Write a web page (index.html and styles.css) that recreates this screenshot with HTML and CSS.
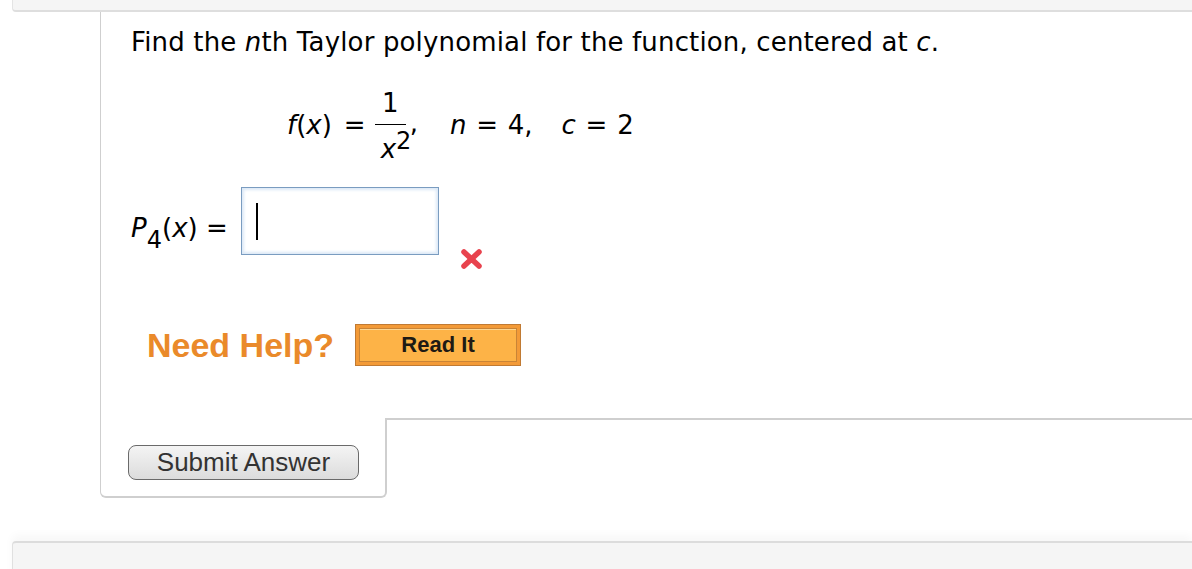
FILE: index.html
```html
<!DOCTYPE html>
<html>
<head>
<meta charset="utf-8">
<link rel="stylesheet" href="styles.css">
</head>
<body>
<div class="top-bar"></div>
<div class="question">
  <div class="content">
    <p class="prompt">Find the <i>n</i>th Taylor polynomial for the function, centered at <i>c</i>.</p>
    <div class="formula">
      <span class="fx"><i>f</i>(<i>x</i>)</span>
      <span class="eq">=</span>
      <span class="frac">
        <span class="num">1</span>
        <span class="den"><i>x</i><sup>2</sup></span>
      </span>
      <span class="comma">,</span>
      <span class="param first"><i>n</i> = 4,</span>
      <span class="param"><i>c</i> = 2</span>
    </div>
    <div class="answer-row">
      <span class="plabel"><i>P</i><sub>4</sub>(<i>x</i>) =</span>
      <div class="answer-box"><span class="caret"></span></div>
      <svg class="wrong" width="30" height="24" viewBox="0 0 30 24">
        <path d="M7 5 L22 19 M22 5 L7 19" stroke="#e8434e" stroke-width="5.5" stroke-linecap="round"/>
      </svg>
    </div>
    <div class="help-row">
      <span class="need-help">Need Help?</span>
      <button class="read-it"><span>Read It</span></button>
    </div>
  </div>
  <div class="footer">
    <div class="submit-cell">
      <button class="submit">Submit Answer</button>
    </div>
    <div class="filler"></div>
  </div>
</div>
<div class="next-box"></div>
</body>
</html>
```

FILE: styles.css
```css
html, body {
  margin: 0;
  padding: 0;
  background: #fff;
  overflow: hidden;
}
body {
  font-family: "DejaVu Sans", Verdana, sans-serif;
  color: #000;
  width: 1192px;
  height: 569px;
}
.top-bar {
  margin-left: 12px;
  height: 10px;
  background: #f5f5f5;
  border-bottom: 2px solid #dedede;
  border-left: 1px solid #e4e4e4;
  border-bottom-left-radius: 4px;
}
.question {
  margin-left: 100px;
}
.content {
  border-left: 1px solid #cfcfcf;
  padding: 15px 0 0 30px;
  height: 407px;
  box-sizing: border-box;
}
.prompt {
  margin: 0;
  font-size: 26px;
  line-height: 30px;
  letter-spacing: 0.15px;
}
.formula {
  display: flex;
  align-items: center;
  margin: 28px 0 0 156px;
  font-size: 26px;
  height: 80px;
}
.eq {
  margin: 0 9px 0 12px;
}
.frac {
  display: inline-flex;
  flex-direction: column;
  align-items: flex-start;
  width: 31px;
}
.num {
  line-height: 30px;
  border-bottom: 1.5px solid #000;
  width: 100%;
  text-align: center;
  padding: 2px 0 6px;
}
.den {
  line-height: 30px;
  padding: 9px 0 0 6px;
  white-space: nowrap;
}
.den sup {
  font-size: 24px;
  vertical-align: 9px;
  line-height: 0;
}
.comma {
  margin-left: 4px;
  position: relative;
  top: -2px;
}
.param {
  margin-left: 29px;
  word-spacing: 1.5px;
}
.param.first {
  margin-left: 32px;
}
.answer-row {
  display: flex;
  align-items: flex-start;
  margin-top: 22px;
  height: 80px;
}
.plabel {
  font-size: 26px;
  line-height: 30px;
  margin-top: 26px;
  margin-right: 13px;
  white-space: nowrap;
}
.plabel sub {
  font-size: 24px;
  vertical-align: -11px;
  line-height: 0;
}
.answer-box {
  width: 196px;
  height: 66px;
  border: 1px solid #7a9cc0;
  box-shadow: inset 0 0 3px 2px #dbe8f6;
  background: #fff;
  display: flex;
  align-items: center;
}
.caret {
  display: block;
  width: 2px;
  height: 37px;
  margin-left: 14px;
  background: #000;
}
.wrong {
  margin: 60px 0 0 18px;
}
.help-row {
  display: flex;
  align-items: center;
  margin: 57px 0 0 16px;
}
.need-help {
  font-family: "Liberation Sans", Arial, sans-serif;
  font-weight: bold;
  font-size: 34px;
  color: #ea8a2a;
}
.read-it {
  margin-left: 21px;
  width: 166px;
  height: 42px;
  padding: 3px;
  background: #f39a37;
  border: 1px solid #c07a33;
  cursor: pointer;
}
.read-it span {
  display: flex;
  align-items: center;
  justify-content: center;
  height: 100%;
  box-sizing: border-box;
  border: 1px solid #c98436;
  box-shadow: inset 0 1px 0 #ffd690;
  background: #fdb347;
  font-family: "Liberation Sans", Arial, sans-serif;
  font-weight: bold;
  font-size: 22px;
  color: #1e1a14;
}
.footer {
  display: flex;
}
.submit-cell {
  width: 287px;
  height: 79px;
  box-sizing: border-box;
  border: 1px solid #cfcfcf;
  border-width: 0 2px 2px 1px;
  border-radius: 0 0 6px 6px;
  padding: 26px 0 0 27px;
}
.filler {
  flex: 1;
  border-top: 2px solid #cfcfcf;
  margin-top: -1px;
  margin-left: -2px;
}
.submit {
  width: 231px;
  height: 35px;
  border: 1.5px solid #6a6a6a;
  border-radius: 8px;
  background: linear-gradient(#f4f4f4, #dcdcdc);
  font-family: "Liberation Sans", Arial, sans-serif;
  font-size: 26px;
  color: #333;
  padding: 0;
  cursor: pointer;
}
.next-box {
  margin: 43px 0 0 12px;
  height: 40px;
  background: #f5f5f5;
  border-top: 2px solid #dcdcdc;
  border-left: 1px solid #e0e0e0;
  border-top-left-radius: 4px;
  box-shadow: 0 -6px 8px rgba(0,0,0,0.03);
}
```
